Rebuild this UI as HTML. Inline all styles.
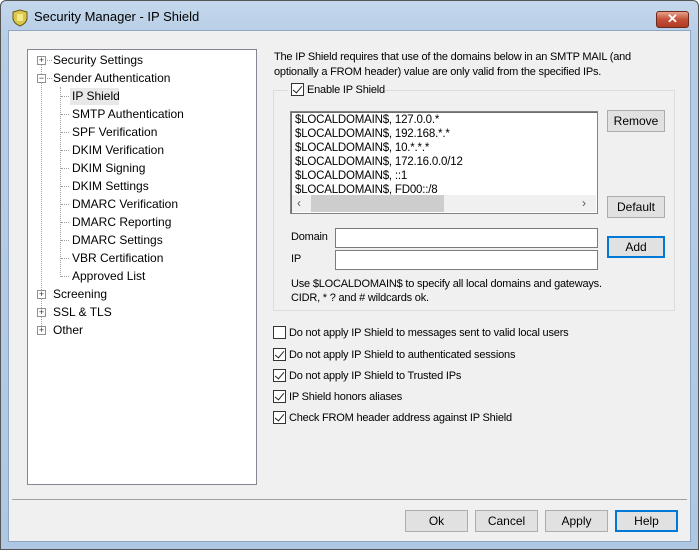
<!DOCTYPE html>
<html><head><style>
*{margin:0;padding:0;box-sizing:border-box}
body{width:699px;height:550px;overflow:hidden;font-family:"Liberation Sans",sans-serif;font-size:12px;color:#000;background:#fff}
.a{position:absolute}
#win{position:absolute;left:0;top:0;width:699px;height:550px;background:linear-gradient(#c4d7ec,#b6cde6 40px,#aec8e4);border:1px solid #555;border-radius:6px 6px 0 0}
#client{position:absolute;left:8px;top:30px;width:683px;height:512px;background:#f0f0f0;border:1px solid #8ea6c2}
.btn{position:absolute;height:22px;background:#e1e1e1;border:1px solid #adadad;text-align:center;line-height:20px}
.btn.def{border:2px solid #0078d7;line-height:18px}
.cb{position:absolute;width:13px;height:13px;border:1px solid #333;background:#fff}
.cb.c::after{content:"";position:absolute;left:3px;top:0px;width:4px;height:8px;border:solid #222;border-width:0 1.5px 1.5px 0;transform:rotate(40deg)}
.t{position:absolute;white-space:nowrap}
.n{font-size:11px;letter-spacing:-0.2px;margin-top:1px}
.exp{position:absolute;width:9px;height:9px;border:1px solid #919191;background:#fff;font-size:9px;line-height:6px;text-align:center;color:#333}
.dv{position:absolute;border-left:1px dotted #a0a0a0}
.dh{position:absolute;border-top:1px dotted #a0a0a0;width:8px}
.inp{position:absolute;background:#fff;border:1px solid #7a7a7a}
</style></head><body>
<div id="win">
<svg class="a" style="left:10px;top:8px" width="18" height="18" viewBox="0 0 18 18"><path d="M9 1 L16 3 L16 9 Q16 14 9 17 Q2 14 2 9 L2 3 Z" fill="#d9c64a" stroke="#6a5a1a"/><path d="M6 5 L12 5 L12 12 L6 12Z" fill="#f2e88a"/></svg>
<div class="t" style="left:33px;top:8px;font-size:13px">Security Manager - IP Shield</div>
<div class="a" style="left:655px;top:10px;width:33px;height:17px;border:1px solid #6b2a20;border-radius:3px;background:linear-gradient(#e8a08a,#c4503a 50%,#b03a22);color:#fff;font-weight:bold;text-align:center;line-height:14px;font-size:13px">✕</div>
</div>
<div id="client"></div>

<div class="a" style="left:27px;top:49px;width:230px;height:436px;background:#fff;border:1px solid #828790"></div>
<div class="dv" style="left:41px;top:64px;height:270px"></div>
<div class="dv" style="left:60px;top:87px;height:190px"></div>
<div class="exp" style="left:37px;top:56px">+</div><div class="dh" style="left:47px;top:60px;width:5px"></div>
<div class="exp" style="left:37px;top:74px">−</div><div class="dh" style="left:47px;top:78px;width:5px"></div>
<div class="t" style="left:53px;top:53px">Security Settings</div>
<div class="t" style="left:53px;top:71px">Sender Authentication</div>
<div class="a" style="left:70px;top:88px;width:49px;height:17px;background:#e8e8e8"></div>
<div class="dh" style="left:61px;top:96px"></div><div class="t" style="left:72px;top:89px">IP Shield</div>
<div class="dh" style="left:61px;top:114px"></div><div class="t" style="left:72px;top:107px">SMTP Authentication</div>
<div class="dh" style="left:61px;top:132px"></div><div class="t" style="left:72px;top:125px">SPF Verification</div>
<div class="dh" style="left:61px;top:150px"></div><div class="t" style="left:72px;top:143px">DKIM Verification</div>
<div class="dh" style="left:61px;top:168px"></div><div class="t" style="left:72px;top:161px">DKIM Signing</div>
<div class="dh" style="left:61px;top:186px"></div><div class="t" style="left:72px;top:179px">DKIM Settings</div>
<div class="dh" style="left:61px;top:204px"></div><div class="t" style="left:72px;top:197px">DMARC Verification</div>
<div class="dh" style="left:61px;top:222px"></div><div class="t" style="left:72px;top:215px">DMARC Reporting</div>
<div class="dh" style="left:61px;top:240px"></div><div class="t" style="left:72px;top:233px">DMARC Settings</div>
<div class="dh" style="left:61px;top:258px"></div><div class="t" style="left:72px;top:251px">VBR Certification</div>
<div class="dh" style="left:61px;top:276px"></div><div class="t" style="left:72px;top:269px">Approved List</div>
<div class="exp" style="left:37px;top:290px">+</div><div class="t" style="left:53px;top:287px">Screening</div>
<div class="exp" style="left:37px;top:308px">+</div><div class="t" style="left:53px;top:305px">SSL &amp; TLS</div>
<div class="exp" style="left:37px;top:326px">+</div><div class="t" style="left:53px;top:323px">Other</div>

<div class="t n" style="left:274px;top:49px;line-height:15px">The IP Shield requires that use of the domains below in an SMTP MAIL (and<br>optionally a FROM header) value are only valid from the specified IPs.</div>

<div class="a" style="left:273px;top:90px;width:402px;height:221px;border:1px solid #dcdcdc"></div>
<div class="a" style="left:288px;top:83px;width:86px;height:14px;background:#f0f0f0"></div>
<div class="cb c" style="left:291px;top:83px"></div>
<div class="t n" style="left:307px;top:83px">Enable IP Shield</div>

<div class="a" style="left:290px;top:111px;width:308px;height:103px;background:#fff;border:1px solid #828282;box-shadow:inset 1px 1px 0 #6e6e6e"></div>
<div class="t" style="left:295px;top:113px;font-size:11.5px;line-height:14px;letter-spacing:-0.2px">$LOCALDOMAIN$, 127.0.0.*<br>$LOCALDOMAIN$, 192.168.*.*<br>$LOCALDOMAIN$, 10.*.*.*<br>$LOCALDOMAIN$, 172.16.0.0/12<br>$LOCALDOMAIN$, ::1<br>$LOCALDOMAIN$, FD00::/8</div>
<div class="a" style="left:292px;top:195px;width:304px;height:17px;background:#f0f0f0"></div>
<div class="a" style="left:311px;top:195px;width:133px;height:17px;background:#cdcdcd"></div>
<div class="t" style="left:297px;top:196px;color:#555">‹</div>
<div class="t" style="left:582px;top:196px;color:#555">›</div>

<div class="btn" style="left:607px;top:110px;width:58px">Remove</div>
<div class="btn" style="left:607px;top:196px;width:58px">Default</div>
<div class="btn def" style="left:607px;top:236px;width:58px">Add</div>

<div class="t n" style="left:291px;top:230px">Domain</div>
<div class="inp" style="left:335px;top:228px;width:263px;height:20px"></div>
<div class="t n" style="left:291px;top:252px">IP</div>
<div class="inp" style="left:335px;top:250px;width:263px;height:20px"></div>
<div class="t n" style="left:291px;top:276px;line-height:14px">Use $LOCALDOMAIN$ to specify all local domains and gateways.<br>CIDR, * ? and # wildcards ok.</div>

<div class="cb" style="left:273px;top:326px"></div><div class="t n" style="left:289px;top:326px">Do not apply IP Shield to messages sent to valid local users</div>
<div class="cb c" style="left:273px;top:348px"></div><div class="t n" style="left:289px;top:348px">Do not apply IP Shield to authenticated sessions</div>
<div class="cb c" style="left:273px;top:369px"></div><div class="t n" style="left:289px;top:369px">Do not apply IP Shield to Trusted IPs</div>
<div class="cb c" style="left:273px;top:390px"></div><div class="t n" style="left:289px;top:390px">IP Shield honors aliases</div>
<div class="cb c" style="left:273px;top:411px"></div><div class="t n" style="left:289px;top:411px">Check FROM header address against IP Shield</div>

<div class="a" style="left:12px;top:499px;width:675px;border-top:1px solid #a0a0a0"></div>
<div class="btn" style="left:405px;top:510px;width:63px">Ok</div>
<div class="btn" style="left:475px;top:510px;width:63px">Cancel</div>
<div class="btn" style="left:545px;top:510px;width:63px">Apply</div>
<div class="btn def" style="left:615px;top:510px;width:63px">Help</div>
</body></html>
